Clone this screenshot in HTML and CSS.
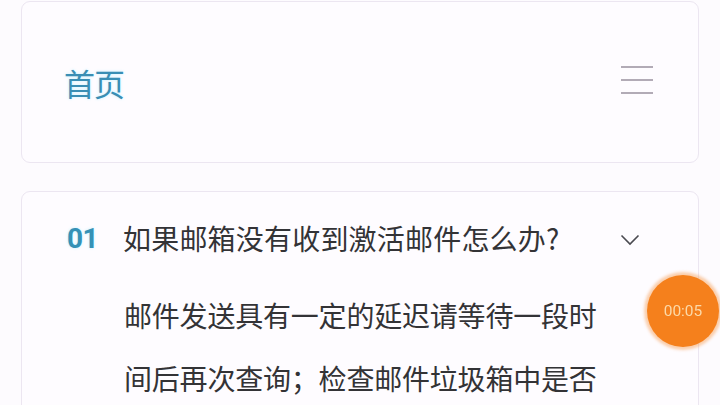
FILE: index.html
```html
<!DOCTYPE html>
<html lang="zh">
<head>
<meta charset="utf-8">
<link rel="stylesheet" href="styles.css">
</head>
<body>
<div class="page">
  <header class="card nav">
    <span class="nav-title">首页</span>
    <span class="menu"><i></i><i></i><i></i></span>
  </header>
  <section class="card faq">
    <div class="q-row">
      <span class="q-num">01</span>
      <span class="q-text">如果邮箱没有收到激活邮件怎么办?</span>
      <svg class="chev" width="20" height="12" viewBox="0 0 20 12"><polyline points="1.5,1.5 10,10 18.5,1.5" fill="none" stroke="#4a4a50" stroke-width="1.6"/></svg>
    </div>
    <p class="answer">邮件发送具有一定的延迟请等待一段时间后再次查询；检查邮件垃圾箱中是否</p>
  </section>
</div>
<div class="timer">00:05</div>
</body>
</html>
```
FILE: styles.css
```css
html, body {
  margin: 0;
  padding: 0;
  background: #fdfbfe;
  font-family: "Noto Sans CJK SC", "Noto Sans", sans-serif;
  overflow: hidden;
  height: 405px;
}
.page {
  padding: 1px 21px 0 21px;
  height: 404px;
  overflow: hidden;
}
.card {
  background: #fefcff;
  border: 1.5px solid #ece6f1;
  border-radius: 9px;
  box-sizing: border-box;
}
.nav {
  height: 162px;
  display: flex;
  align-items: center;
  justify-content: space-between;
  padding: 0 45px 0 42px;
}
.nav-title {
  font-size: 31px;
  color: #3a8eb4;
  letter-spacing: -1px;
  line-height: 1;
  text-shadow: 0 0 3px rgba(120, 230, 255, 0.45);
}
.menu {
  display: flex;
  flex-direction: column;
  gap: 11px;
  width: 32px;
  margin-top: -4px;
}
.menu i {
  display: block;
  height: 2px;
  background: #b2abb6;
}
.faq {
  margin-top: 28px;
  height: 240px;
  padding: 26px 58px 0 45px;
}
.q-row {
  display: flex;
  align-items: center;
  height: 40px;
}
.q-num {
  width: 56px;
  flex: none;
  font-family: "Roboto", "Liberation Sans", sans-serif;
  font-weight: 700;
  font-size: 28px;
  letter-spacing: -0.5px;
  color: #3591b6;
  text-shadow: 0 0 3px rgba(120, 230, 255, 0.45);
}
.q-text {
  flex: 1;
  font-size: 28px;
  color: #333336;
  letter-spacing: 0.2px;
}
.chev {
  flex: none;
  margin-top: 4px;
}
.answer {
  margin: 26px 0 0 57px;
  font-size: 28px;
  line-height: 63px;
  color: #333336;
  width: 480px;
  letter-spacing: -0.2px;
}
.timer {
  position: fixed;
  left: 647px;
  top: 275px;
  width: 72px;
  height: 72px;
  border-radius: 50%;
  background: #f5801c;
  box-shadow: 0 0 3px 3px rgba(247, 150, 70, 0.45);
  color: #fcd9a8;
  font-family: "Roboto", "Liberation Sans", sans-serif;
  font-size: 15.5px;
  display: flex;
  align-items: center;
  justify-content: center;
}
```
